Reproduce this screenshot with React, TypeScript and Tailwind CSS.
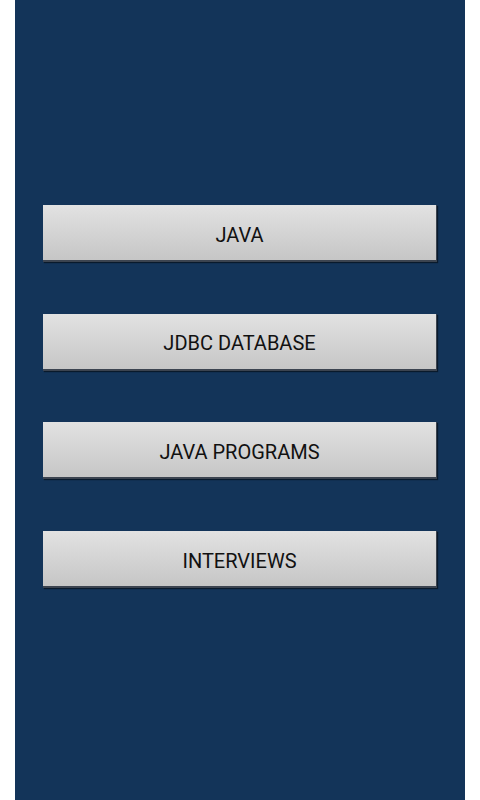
const items = ["JAVA", "JDBC DATABASE", "JAVA PROGRAMS", "INTERVIEWS"]

export default function App() {
  return (
    <div className="flex h-[800px] w-[480px] bg-white">
      <div className="mx-[15px] flex flex-1 flex-col gap-[51.7px] bg-[#133459] px-[28px] pt-[205px]">
        {items.map((label) => (
          <button
            key={label}
            className="flex h-[57px] w-full items-center justify-center border-b-2 border-r border-[#3c4450] bg-gradient-to-b from-[#e2e2e2] to-[#c6c6c6] pt-[4px] text-[20px] text-[#111] shadow-[1px_1px_1px_rgba(0,0,0,0.5)]"
            style={{ fontFamily: "Roboto, 'Liberation Sans', sans-serif" }}
          >
            {label}
          </button>
        ))}
      </div>
    </div>
  )
}
